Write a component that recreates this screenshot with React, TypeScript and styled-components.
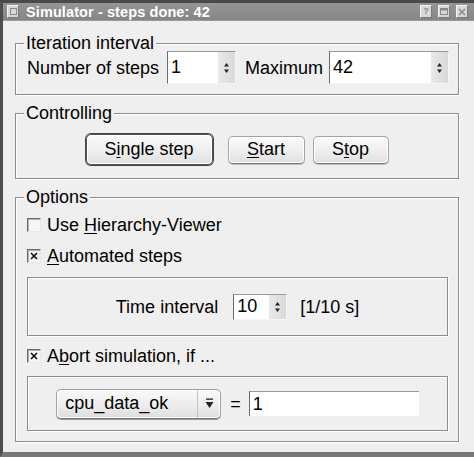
import React from 'react';
import styled, { createGlobalStyle } from 'styled-components';

const Global = createGlobalStyle`
  html, body { margin: 0; padding: 0; background: #efefef; }
  body { font-family: "Liberation Sans", Arial, Helvetica, sans-serif; color: #000; }
  * { box-sizing: border-box; }
`;

const Window = styled.div`
  width: 474px;
  height: 457px;
  display: flex;
  flex-direction: column;
  background: #efefef;
  border-left: 3px solid #4e4e4e;
  border-top: 3px solid #4a4a4a;
  border-bottom: 5px solid #787878;
  overflow: hidden;
`;

const TitleBar = styled.div`
  height: 18px;
  flex: none;
  display: flex;
  align-items: center;
  padding: 0 6px 0 4px;
  background: linear-gradient(#959595, #858585);
  border-bottom: 1px solid #9a9a9a;
`;

const TitleText = styled.span`
  margin-left: 7px;
  color: #fff;
  font-weight: bold;
  font-size: 14.5px;
  letter-spacing: 0.1px;
`;

const TitleButtons = styled.div`
  margin-left: auto;
  display: flex;
  gap: 6px;
`;

const TitleBtn = styled.div`
  width: 12px;
  height: 13px;
  display: flex;
  align-items: center;
  justify-content: center;
  background: #d8d8d8;
  border: 1px solid;
  border-color: #f4f4f4 #7a7a7a #7a7a7a #f4f4f4;
  font-size: 9px;
  font-weight: bold;
  color: #8a8a8a;
  line-height: 1;
`;

const Body = styled.div`
  flex: 1;
  display: flex;
  flex-direction: column;
  gap: 18px;
  padding: 22px 0 0 12px;
`;

const Group = styled.div<{ $h: number }>`
  position: relative;
  width: 444px;
  height: ${(p) => p.$h}px;
  border: 1px solid #8c8c8c;
  box-shadow: inset 1px 1px 0 #fff, 1px 1px 0 #fff;
`;

const GroupTitle = styled.span`
  position: absolute;
  top: -11px;
  left: 8px;
  padding: 0 2px;
  background: #efefef;
  font-size: 18px;
  line-height: 20px;
`;

const Row = styled.div<{ $pad?: string; $center?: boolean }>`
  display: flex;
  align-items: center;
  justify-content: ${(p) => (p.$center ? 'center' : 'flex-start')};
  padding: ${(p) => p.$pad ?? '0'};
`;

const Label = styled.span<{ $ml?: number; $mr?: number }>`
  font-size: 18px;
  line-height: 20px;
  margin-left: ${(p) => p.$ml ?? 0}px;
  margin-right: ${(p) => p.$mr ?? 0}px;
  white-space: nowrap;
`;

const Spin = styled.div<{ $w: number; $h: number }>`
  width: ${(p) => p.$w}px;
  height: ${(p) => p.$h}px;
  display: flex;
  background: #fff;
  border-top: 1px solid #9a9a9a;
  border-left: 1px solid #6a6a6a;
  border-right: 1px solid #f6f6f6;
  border-bottom: 1px solid #f6f6f6;
`;

const SpinValue = styled.span`
  flex: 1;
  display: flex;
  align-items: center;
  padding-left: 3px;
  font-size: 18px;
`;

const SpinArrows = styled.div`
  width: 17px;
  display: flex;
  align-items: center;
  justify-content: center;
  background: linear-gradient(90deg, #e9e9e9, #d9d9d9);
`;

const ArrowsIcon = () => (
  <svg width="7" height="12" viewBox="0 0 7 12">
    <path d="M3.5 1 L6 4.5 L1 4.5 Z" fill="#222" />
    <path d="M3.5 11 L6 7.5 L1 7.5 Z" fill="#222" />
  </svg>
);

const SpinBox = ({ value, w, h }: { value: string; w: number; h: number }) => (
  <Spin $w={w} $h={h}>
    <SpinValue>{value}</SpinValue>
    <SpinArrows>
      <ArrowsIcon />
    </SpinArrows>
  </Spin>
);

const Button = styled.div<{ $w: number; $ml?: number; $default?: boolean }>`
  width: ${(p) => p.$w}px;
  height: ${(p) => (p.$default ? 31 : 28)}px;
  margin-left: ${(p) => p.$ml ?? 0}px;
  display: flex;
  align-items: center;
  justify-content: center;
  font-size: 18px;
  border-radius: 5px;
  background: linear-gradient(#fbfbfb, #ececec 60%, #e0e0e0);
  border: 1px solid #a4a4a4;
  border-bottom-color: #7c7c7c;
  box-shadow: ${(p) =>
    p.$default ? '0 0 0 1px #444, inset 0 0 0 1px #fff' : 'inset 0 0 0 1px #fff, 0 1px 0 #bbb'};
  ${(p) => (p.$default ? 'border-color: #555;' : '')}
`;

const Mn = styled.span`
  text-decoration: underline;
  text-underline-offset: 2px;
  text-decoration-thickness: 1px;
`;

const Options = styled.div`
  display: flex;
  flex-direction: column;
  padding: 17px 10px 0 11px;
`;

const CheckRow = styled.div<{ $mt?: number }>`
  display: flex;
  align-items: center;
  gap: 6px;
  height: 20px;
  margin-top: ${(p) => p.$mt ?? 0}px;
`;

const Box = styled.div`
  width: 14px;
  height: 14px;
  display: flex;
  align-items: center;
  justify-content: center;
  background: #f6f6f6;
  border: 1px solid;
  border-color: #6c6c6c #e8e8e8 #e8e8e8 #6c6c6c;
  box-shadow: inset 1px 1px 0 #b0b0b0;
`;

const CheckBox = ({ checked }: { checked?: boolean }) => (
  <Box>
    {checked && (
      <svg width="8" height="8" viewBox="0 0 8 8">
        <path d="M1 1 L7 7 M7 1 L1 7" stroke="#111" strokeWidth="1.6" />
      </svg>
    )}
  </Box>
);

const Inner = styled.div<{ $h: number; $mt: number }>`
  height: ${(p) => p.$h}px;
  margin-top: ${(p) => p.$mt}px;
  display: flex;
  align-items: center;
  justify-content: center;
  border: 1px solid #8c8c8c;
  box-shadow: inset 1px 1px 0 #fff, 1px 1px 0 #fff;
`;

const SpinSlot = styled.div<{ $ml: number; $mr: number }>`
  margin-left: ${(p) => p.$ml}px;
  margin-right: ${(p) => p.$mr}px;
`;

const Combo = styled.div`
  width: 165px;
  height: 30px;
  display: flex;
  border-radius: 5px;
  border: 1px solid #a0a0a0;
  border-bottom-color: #777;
  background: linear-gradient(#fafafa, #ebebeb 60%, #dedede);
  box-shadow: inset 0 0 0 1px #fff, 0 1px 0 #999;
`;

const ComboText = styled.span`
  flex: 1;
  display: flex;
  align-items: center;
  padding-left: 8px;
  font-size: 18px;
`;

const ComboArrow = styled.div`
  width: 23px;
  display: flex;
  align-items: center;
  justify-content: center;
  border-left: 1px solid #c4c4c4;
`;

const TextField = styled.div`
  width: 170px;
  height: 25px;
  display: flex;
  align-items: center;
  padding-left: 3px;
  font-size: 18px;
  background: #fff;
  border-top: 1px solid #9a9a9a;
  border-left: 1px solid #6a6a6a;
`;

export default function App() {
  return (
    <>
      <Global />
      <Window>
        <TitleBar>
          <TitleBtn>
            <svg width="7" height="7" viewBox="0 0 7 7">
              <rect x="0.5" y="0.5" width="6" height="6" fill="none" stroke="#8a8a8a" />
            </svg>
          </TitleBtn>
          <TitleText>Simulator - steps done: 42</TitleText>
          <TitleButtons>
            <TitleBtn>?</TitleBtn>
            <TitleBtn>
              <svg width="8" height="7" viewBox="0 0 8 7">
                <rect x="0.5" y="0.5" width="7" height="6" fill="none" stroke="#8a8a8a" />
                <rect x="0.5" y="0.5" width="7" height="2" fill="#8a8a8a" />
              </svg>
            </TitleBtn>
            <TitleBtn>
              <svg width="8" height="8" viewBox="0 0 8 8">
                <path d="M1 1 L7 7 M7 1 L1 7" stroke="#8a8a8a" strokeWidth="1.5" />
              </svg>
            </TitleBtn>
          </TitleButtons>
        </TitleBar>
        <Body>
          <Group $h={52}>
            <GroupTitle>Iteration interval</GroupTitle>
            <Row $pad="7px 0 0 11px">
              <Label $mr={8}>Number of steps</Label>
              <SpinBox value="1" w={69} h={33} />
              <Label $ml={9} $mr={6}>
                Maximum
              </Label>
              <SpinBox value="42" w={120} h={33} />
            </Row>
          </Group>
          <Group $h={66}>
            <GroupTitle>Controlling</GroupTitle>
            <Row $pad="20px 0 0 0" $center>
              <Button $w={127} $default>
                <span>
                  S<Mn>i</Mn>ngle step
                </span>
              </Button>
              <Button $w={77} $ml={15}>
                <span>
                  <Mn>S</Mn>tart
                </span>
              </Button>
              <Button $w={76} $ml={8}>
                <span>
                  S<Mn>t</Mn>op
                </span>
              </Button>
            </Row>
          </Group>
          <Group $h={245}>
            <GroupTitle>Options</GroupTitle>
            <Options>
              <CheckRow>
                <CheckBox />
                <Label>
                  Use <Mn>H</Mn>ierarchy-Viewer
                </Label>
              </CheckRow>
              <CheckRow $mt={11}>
                <CheckBox checked />
                <Label>
                  <Mn>A</Mn>utomated steps
                </Label>
              </CheckRow>
              <Inner $h={59} $mt={11}>
                <Label>Time interval</Label>
                <SpinSlot $ml={15} $mr={13}>
                  <SpinBox value="10" w={54} h={26} />
                </SpinSlot>
                <Label>[1/10 s]</Label>
              </Inner>
              <CheckRow $mt={10}>
                <CheckBox checked />
                <Label>
                  A<Mn>b</Mn>ort simulation, if ...
                </Label>
              </CheckRow>
              <Inner $h={55} $mt={10}>
                <Combo>
                  <ComboText>cpu_data_ok</ComboText>
                  <ComboArrow>
                    <svg width="9" height="11" viewBox="0 0 9 11">
                      <rect x="1" y="0.5" width="7" height="1.3" fill="#222" />
                      <path d="M0.5 4 L8.5 4 L4.5 10 Z" fill="#222" />
                    </svg>
                  </ComboArrow>
                </Combo>
                <Label $ml={9} $mr={8}>
                  =
                </Label>
                <TextField>1</TextField>
              </Inner>
            </Options>
          </Group>
        </Body>
      </Window>
    </>
  );
}
